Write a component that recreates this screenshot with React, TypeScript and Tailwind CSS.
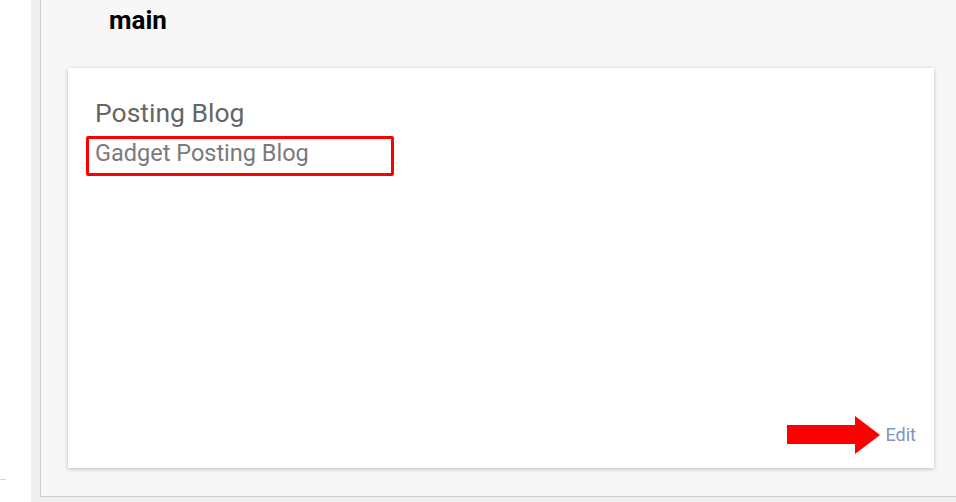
export default function App() {
  return (
    <div className="flex h-[502px] w-[956px] overflow-hidden bg-white font-['Roboto',sans-serif]">
      {/* left gutter */}
      <div className="relative w-[31px] shrink-0 bg-white">
        <div className="absolute left-0 top-[479px] h-px w-[6px] bg-[#d8d8d8]" />
      </div>
      {/* outer frame */}
      <div className="flex flex-1 flex-col bg-[#efefef] pb-[5px] pl-[9px]">
        <div className="flex flex-1 flex-col border-b border-l border-[#cccccc] bg-[#f7f7f7] pl-[27px]">
          <div className="h-[68px] pl-[41px] pt-[4px]">
            <h1 className="text-[26px] font-bold leading-[32px] text-black">main</h1>
          </div>
          <div className="relative flex h-[400px] w-[866px] flex-col bg-white pl-[27px] pr-[18px] pt-[28px] shadow-[0_1px_4px_rgba(0,0,0,0.25)]">
            <h2 className="text-[26.5px] leading-[34px] text-[#666666]">Posting Blog</h2>
            <p className="mt-[8px] text-[23.5px] leading-[30px] text-[#7a7a7a]">Gadget Posting Blog</p>
            <div className="absolute left-[18px] top-[68px] h-[40px] w-[308px] rounded-[2px] border-[3px] border-[#ff0000]" />
            <div className="mt-auto flex items-center justify-end gap-[6px] pb-[14px]">
              <svg width="93" height="38" viewBox="0 0 93 38" className="shrink-0">
                <polygon points="0,9 68,9 68,0 93,19 68,38 68,28 0,28" fill="#ff0000" />
              </svg>
              <span className="text-[18px] leading-[24px] text-[#7b95c0]">Edit</span>
            </div>
          </div>
        </div>
      </div>
    </div>
  );
}
